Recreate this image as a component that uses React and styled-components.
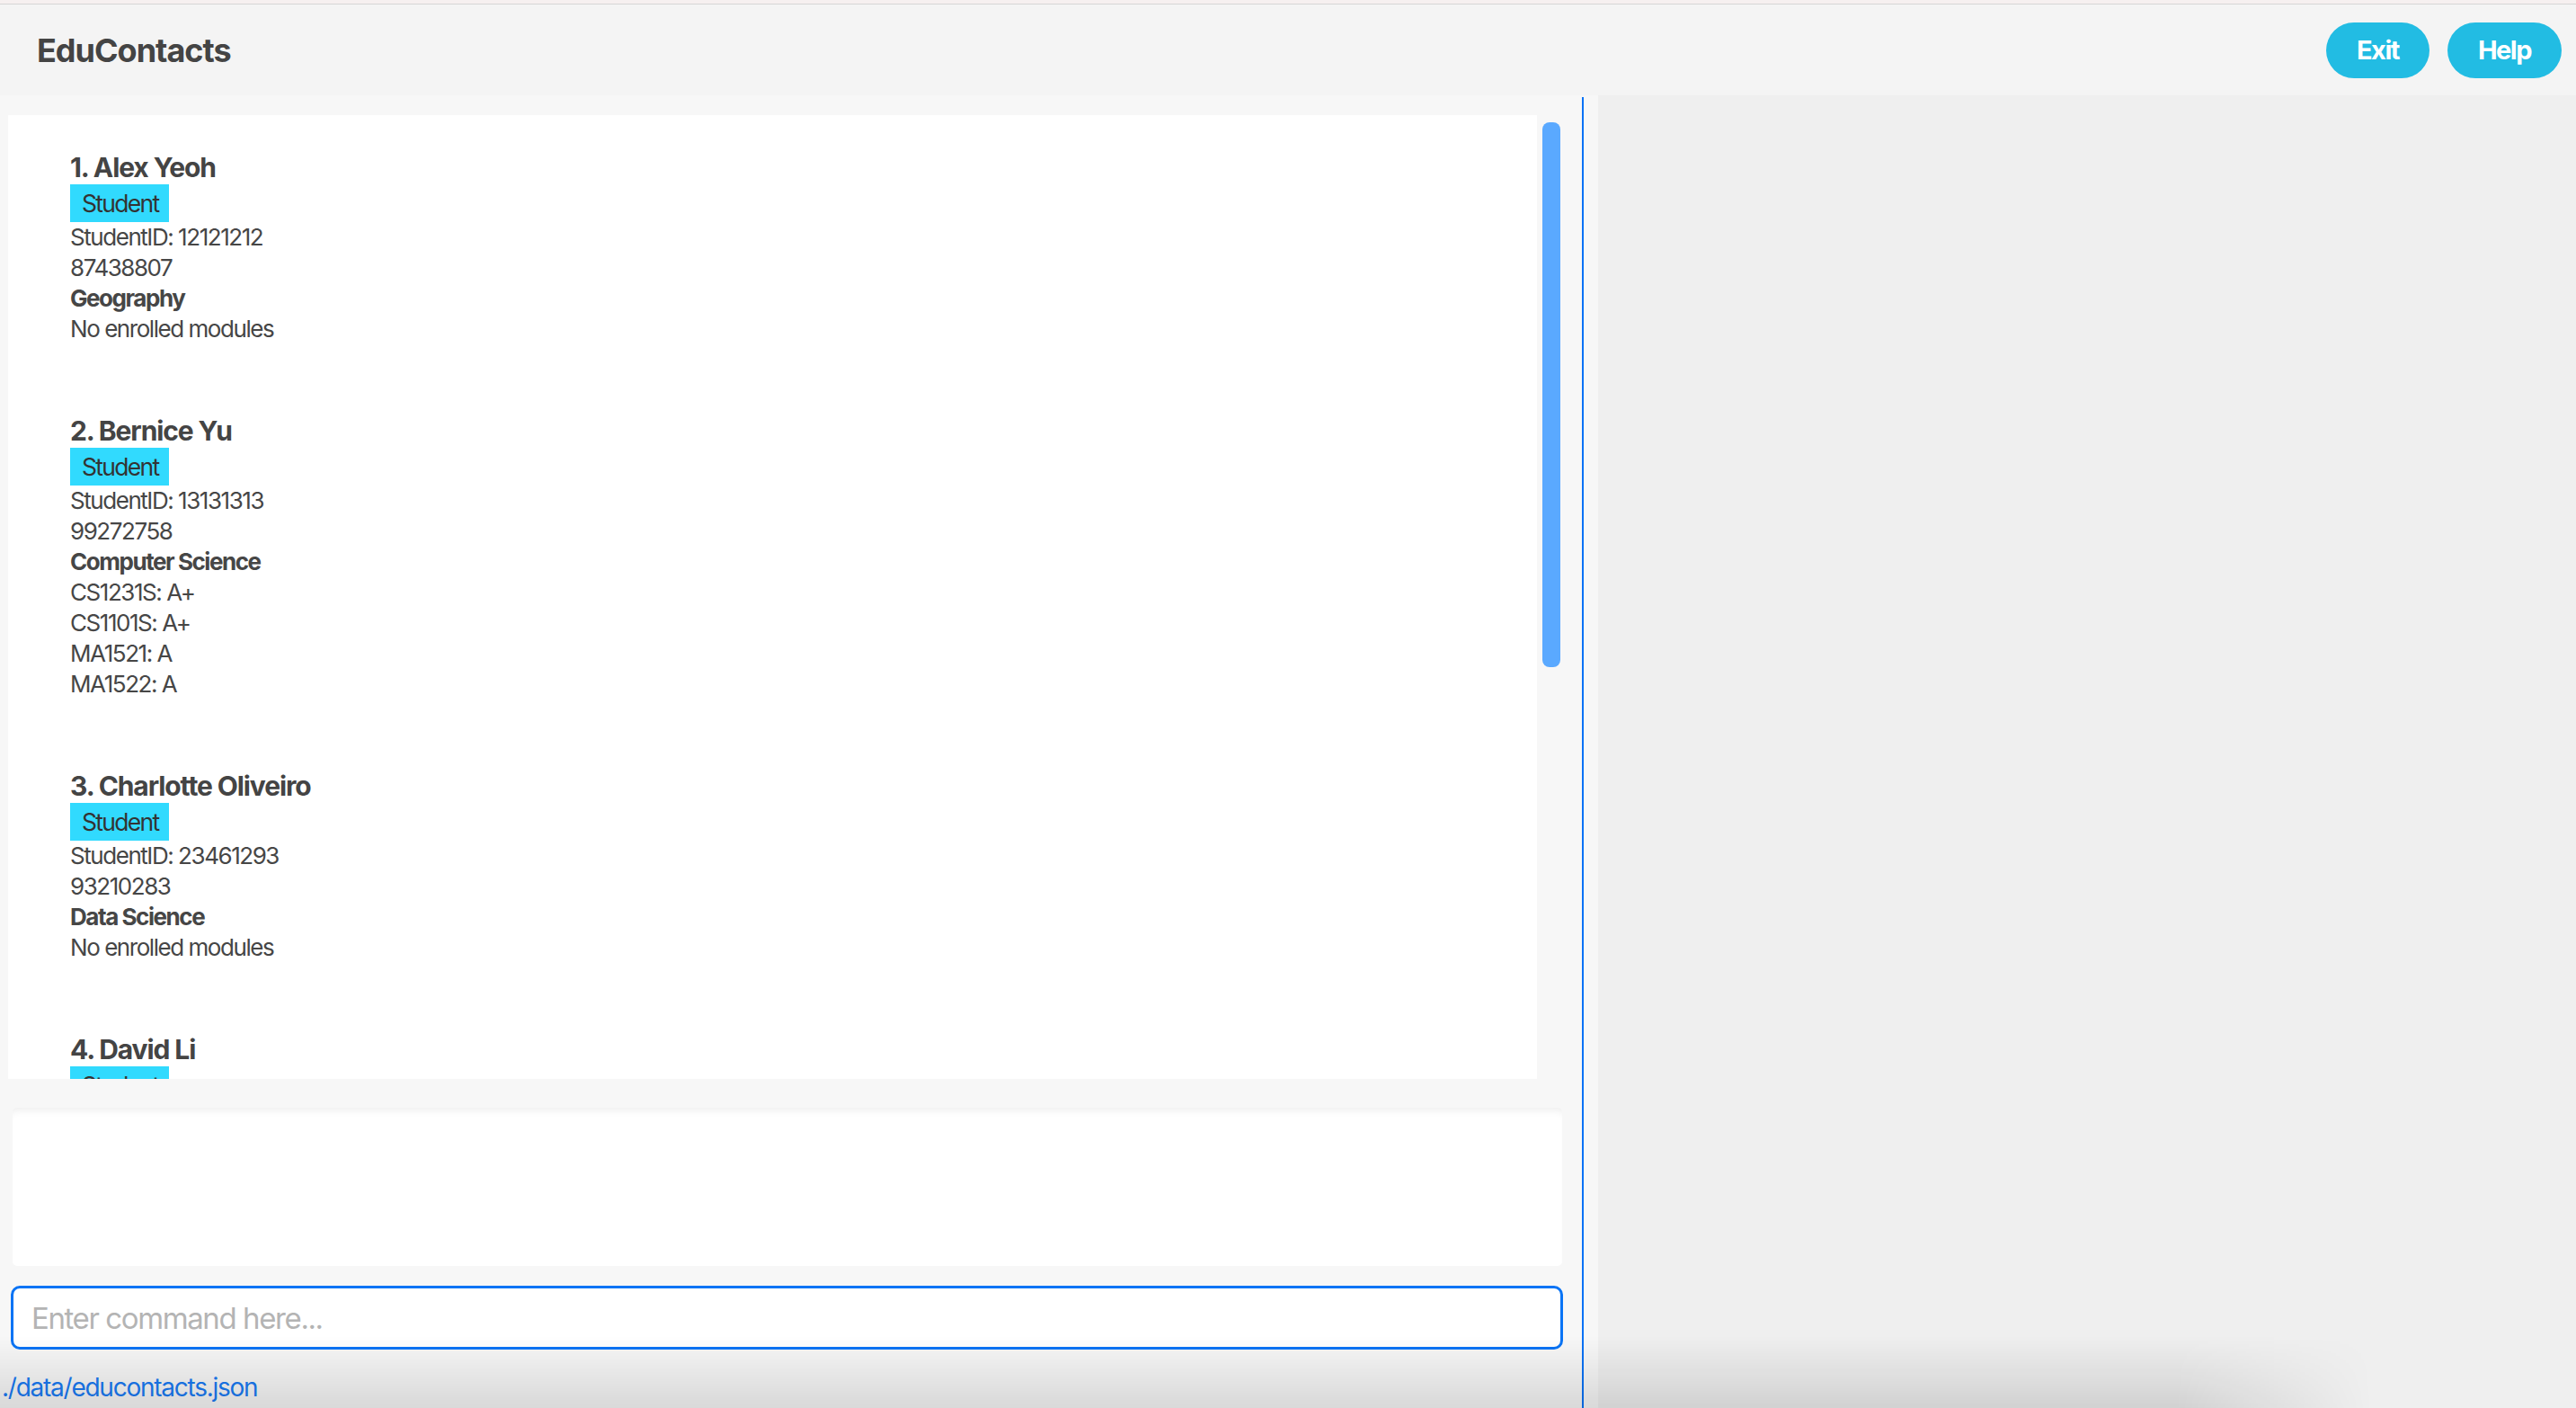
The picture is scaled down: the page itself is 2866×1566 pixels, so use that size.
import React from "react";
import styled, { createGlobalStyle } from "styled-components";

const Global = createGlobalStyle`
  html, body { margin: 0; padding: 0; background: #f7f7f7; }
  body { font-family: Inter, "Noto Sans", "Liberation Sans", sans-serif; }
  * { box-sizing: border-box; }
`;

const Page = styled.div`
  height: 1566px;
  display: flex;
  flex-direction: column;
  overflow: hidden;
  position: relative;
`;

const TopStrip = styled.div`
  height: 5px;
  flex: none;
  background: #f6f0f0;
  border-bottom: 1px solid #d6d6d6;
`;

const Header = styled.header`
  height: 101px;
  flex: none;
  background: #f4f4f4;
  display: flex;
  align-items: center;
  justify-content: space-between;
  padding: 0 16px 0 41px;
`;

const Title = styled.h1`
  margin: 0;
  font-size: 36px;
  font-weight: 700;
  color: #444;
  letter-spacing: -1px;
`;

const Actions = styled.div`
  display: flex;
  gap: 20px;
`;

const PillButton = styled.button`
  height: 62px;
  padding: 0 34px;
  border: none;
  border-radius: 31px;
  background: #22bce3;
  color: #fff;
  font-family: inherit;
  font-size: 29px;
  font-weight: 700;
  letter-spacing: -1.5px;
`;

const Main = styled.div`
  flex: 1;
  display: flex;
  min-height: 0;
  &::after {
    content: "";
    position: absolute;
    left: 0;
    bottom: 0;
    width: 2640px;
    height: 80px;
    pointer-events: none;
    background: linear-gradient(to bottom, rgba(0,0,0,0), rgba(0,0,0,0.12));
    -webkit-mask-image: linear-gradient(to right, #000 calc(100% - 220px), transparent);
    mask-image: linear-gradient(to right, #000 calc(100% - 220px), transparent);
  }
`;

const LeftCol = styled.section`
  width: 1760px;
  flex: none;
  background: #f7f7f7;
  display: flex;
  flex-direction: column;
  padding: 22px 21px 0 0;
`;

const Divider = styled.div`
  width: 2px;
  flex: none;
  margin-top: 2px;
  background: #0a72f5;
`;

const Gutter = styled.div`
  width: 16px;
  flex: none;
  background: #f7f7f7;
`;

const RightPanel = styled.section`
  flex: 1;
  background: #efefef;
`;

const ListRow = styled.div`
  height: 1072px;
  flex: none;
  margin-left: 9px;
  display: flex;
`;

const List = styled.div`
  flex: 1;
  background: #fff;
  overflow: hidden;
`;

const Track = styled.div`
  width: 29px;
  flex: none;
  padding: 8px 0 0 6px;
`;

const Thumb = styled.div`
  width: 20px;
  height: 606px;
  border-radius: 8px;
  background: #5aa9ff;
`;

const Card = styled.div`
  padding: 39px 69px 38px;
  color: #454545;
`;

const Name = styled.div`
  font-size: 30px;
  font-weight: 700;
  line-height: 38px;
  letter-spacing: -1.1px;
  color: #444;
`;

const Tag = styled.span`
  display: inline-block;
  height: 42px;
  line-height: 42px;
  padding: 0 12px 0 13px;
  background: #31dafe;
  color: #333;
  font-size: 26.5px;
  letter-spacing: -1.7px;
`;

const Line = styled.div`
  font-size: 26px;
  line-height: 34px;
  letter-spacing: -1.45px;
  font-weight: ${(p) => (p.$bold ? 700 : 400)};
  color: #464646;
`;

const ResultBox = styled.div`
  height: 176px;
  flex: none;
  margin: 32px 1px 0 14px;
  background: #fff;
  border-radius: 5px;
  box-shadow: inset 0 9px 8px -6px rgba(0, 0, 0, 0.07);
`;

const CommandInput = styled.input`
  height: 71px;
  flex: none;
  margin: 22px 0 0 12px;
  border: 3px solid #0a74f5;
  border-radius: 10px;
  background: #fff;
  padding: 0 20px;
  font-family: inherit;
  font-size: 33px;
  letter-spacing: -1.4px;
  color: #333;
  outline: none;
  &::placeholder { color: #b4b4b4; }
`;

const Status = styled.div`
  flex: 1;
  padding: 27px 0 0 2px;
  font-size: 28px;
  line-height: 30px;
  letter-spacing: -1.25px;
  color: #1a7af2;
`;

const contacts = [
  { name: "Alex Yeoh", id: "12121212", phone: "87438807", major: "Geography", modules: [] },
  {
    name: "Bernice Yu",
    id: "13131313",
    phone: "99272758",
    major: "Computer Science",
    modules: ["CS1231S: A+", "CS1101S: A+", "MA1521: A", "MA1522: A"],
  },
  { name: "Charlotte Oliveiro", id: "23461293", phone: "93210283", major: "Data Science", modules: [] },
  { name: "David Li", id: "91031282", phone: "91031282", major: "Mathematics", modules: [] },
];

export default function App() {
  return (
    <Page>
      <Global />
      <TopStrip />
      <Header>
        <Title>EduContacts</Title>
        <Actions>
          <PillButton>Exit</PillButton>
          <PillButton>Help</PillButton>
        </Actions>
      </Header>
      <Main>
        <LeftCol>
          <ListRow>
            <List>
              {contacts.map((c, i) => (
                <Card key={c.name}>
                  <Name>
                    {i + 1}. {c.name}
                  </Name>
                  <Tag>Student</Tag>
                  <Line>StudentID: {c.id}</Line>
                  <Line>{c.phone}</Line>
                  <Line $bold>{c.major}</Line>
                  {c.modules.length === 0 ? (
                    <Line>No enrolled modules</Line>
                  ) : (
                    c.modules.map((m) => <Line key={m}>{m}</Line>)
                  )}
                </Card>
              ))}
            </List>
            <Track>
              <Thumb />
            </Track>
          </ListRow>
          <ResultBox />
          <CommandInput placeholder="Enter command here..." />
          <Status>./data/educontacts.json</Status>
        </LeftCol>
        <Divider />
        <Gutter />
        <RightPanel />
      </Main>
    </Page>
  );
}
